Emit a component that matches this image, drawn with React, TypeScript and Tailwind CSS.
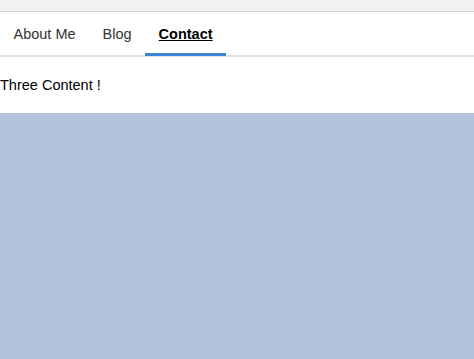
import React, { useState } from "react";

const TABS = ["About Me", "Blog", "Contact"];
const CONTENT = ["One", "Two", "Three"];

export default function App() {
  const [active, setActive] = useState(2);

  return (
    <div className="flex min-h-[359px] flex-col bg-[#b3c3dc] font-['Liberation_Sans',Arial,sans-serif]">
      {/* window chrome strip */}
      <div className="h-[12px] border-b border-[#d6d5d6] bg-[#f2f0f1]" />

      <div className="bg-white">
        <div className="flex h-[45px] border-b-2 border-[#e2e2e2]">
          {TABS.map((tab, i) => (
            <button
              key={tab}
              onClick={() => setActive(i)}
              className={`relative px-[13.5px] pt-[2px] text-[14.5px] ${
                i === active ? "font-bold text-black underline" : "text-[#333]"
              }`}
            >
              {tab}
              {i === active && (
                <span className="absolute bottom-[-1px] left-0 right-0 h-[3px] bg-[#3d84d9]" />
              )}
            </button>
          ))}
        </div>

        <div className="flex h-[56px] items-center pt-[2px] text-[14.5px] text-black">
          {CONTENT[active]} Content !
        </div>
      </div>
    </div>
  );
}
